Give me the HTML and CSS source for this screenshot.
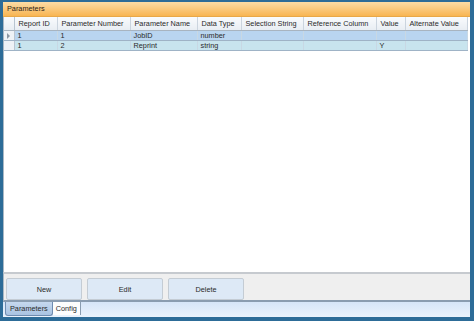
FILE: index.html
```html
<!DOCTYPE html>
<html lang="en">
<head>
    <meta charset="UTF-8">
    <title>Parameters</title>
    <link rel="stylesheet" href="styles.css">
</head>
<body>
    <div class="window">
        <div class="title">Parameters</div>
        <div class="grid-area">
            <table class="grid">
                <colgroup>
                    <col class="c-head">
                    <col class="c-rid">
                    <col class="c-pnum">
                    <col class="c-pname">
                    <col class="c-type">
                    <col class="c-sel">
                    <col class="c-ref">
                    <col class="c-val">
                    <col class="c-alt">
                </colgroup>
                <thead>
                    <tr>
                        <th class="rowhead"></th>
                        <th>Report ID</th>
                        <th>Parameter Number</th>
                        <th>Parameter Name</th>
                        <th>Data Type</th>
                        <th>Selection String</th>
                        <th>Reference Column</th>
                        <th>Value</th>
                        <th>Alternate Value</th>
                    </tr>
                </thead>
                <tbody>
                    <tr class="selected">
                        <td class="rowhead"><span class="arrow"></span></td>
                        <td>1</td>
                        <td>1</td>
                        <td>JobID</td>
                        <td>number</td>
                        <td></td>
                        <td></td>
                        <td></td>
                        <td></td>
                    </tr>
                    <tr class="alt">
                        <td class="rowhead"></td>
                        <td>1</td>
                        <td>2</td>
                        <td>Reprint</td>
                        <td>string</td>
                        <td></td>
                        <td></td>
                        <td>Y</td>
                        <td></td>
                    </tr>
                </tbody>
            </table>
        </div>
        <div class="buttons">
            <button>New</button>
            <button>Edit</button>
            <button>Delete</button>
        </div>
        <div class="tabs">
            <span class="tab active">Parameters</span>
            <span class="tab">Config</span>
        </div>
    </div>
</body>
</html>
```

FILE: styles.css
```css
html, body {
    margin: 0;
    padding: 0;
}
body {
    font-family: "Liberation Sans", Arial, sans-serif;
    font-size: 7.3px;
    color: #2a2a2a;
    background: #2d6c98;
}
.window {
    width: 474px;
    height: 321px;
    box-sizing: border-box;
    padding: 2px 4px 4px 3px;
    background: #2d6c98;
    display: flex;
    flex-direction: column;
}
.title {
    height: 14px;
    line-height: 14px;
    padding-left: 4px;
    background: linear-gradient(#fcdca6, #f8b552);
    color: #2a2218;
    border-bottom: 1px solid #e8a848;
}
.grid-area {
    height: 255px;
    background: #fff;
    border-left: 1px solid #aab8c4;
    overflow: hidden;
}
.grid {
    border-collapse: collapse;
    table-layout: fixed;
    width: 463px;
}
.c-head { width: 10px; }
.c-rid { width: 43px; }
.c-pnum { width: 73px; }
.c-pname { width: 67px; }
.c-type { width: 44px; }
.c-sel { width: 62px; }
.c-ref { width: 73px; }
.c-val { width: 29px; }
.c-alt { width: 62px; }
.grid th {
    height: 13px;
    font-weight: normal;
    text-align: left;
    padding: 0 0 0 4px;
    background: linear-gradient(#f9fbfd, #e8edf3);
    border-right: 1px solid #cbd4de;
    border-bottom: 1px solid #a8b4c0;
    white-space: nowrap;
    overflow: hidden;
}
.grid td {
    height: 9px;
    padding: 0 0 0 3px;
    border-right: 1px solid #c8d8e4;
    border-bottom: 1px solid #9fb3c6;
    white-space: nowrap;
    overflow: hidden;
    line-height: 9px;
}
.grid .rowhead {
    padding: 0;
    background: #eef2f6;
    border-right: 1px solid #b8c4d0;
}
.grid th.rowhead {
    background: linear-gradient(#f9fbfd, #e8edf3);
}
.selected td {
    background: #b9d5f0;
}
.alt td {
    background: #c8e4ee;
}
.arrow {
    display: block;
    width: 0;
    height: 0;
    margin-left: 3px;
    border-left: 3px solid #8a96a2;
    border-top: 3px solid transparent;
    border-bottom: 3px solid transparent;
}
.buttons {
    height: 30px;
    box-sizing: border-box;
    padding: 4px 0 0 2px;
    display: flex;
    gap: 5px;
    background: #efefef;
    border-top: 2px solid #c6cacf;
    border-left: 1px solid #aab8c4;
    border-bottom: 2px solid #8a9cb0;
}
.buttons button {
    width: 76px;
    height: 22px;
    margin: 0;
    padding: 0;
    font-family: inherit;
    font-size: 7.3px;
    color: #2a2a2a;
    background: #dde9f6;
    border: 1px solid #c4ccd4;
    border-radius: 2px;
}
.tabs {
    height: 15px;
    box-sizing: border-box;
    padding: 0 0 0 2px;
    display: flex;
    background: linear-gradient(#d6e5f8, #eaf2fc);
}
.tab {
    height: 13px;
    line-height: 13px;
    padding: 0 3px;
    border-right: 1px solid #8a9cb0;
    background: #fdfdfd;
}
.tab.active {
    background: linear-gradient(#c6d8ee, #a9c3e2);
    border: 1px solid #6f8cb0;
    border-top: none;
    border-radius: 0 0 3px 3px;
    padding: 0 4px;
}
```
